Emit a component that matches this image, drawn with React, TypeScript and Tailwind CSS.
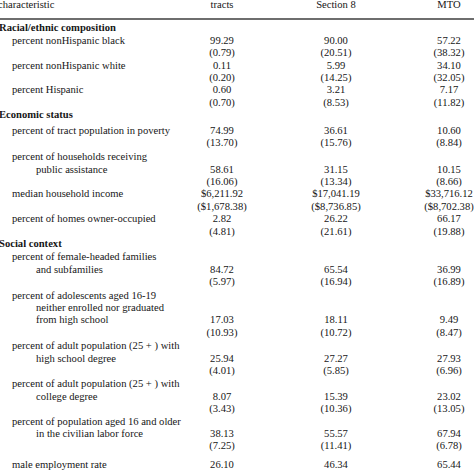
import React from 'react';

type Item = {
  lines: string[];
  values: [string, string, string];
  sds?: [string, string, string];
  gap?: string;
};

type Section = {
  title: string;
  gap?: string;
  items: Item[];
};

const sections: Section[] = [
  {
    title: 'Racial/ethnic composition',
    items: [
      { lines: ['percent nonHispanic black'], values: ['99.29', '90.00', '57.22'], sds: ['(0.79)', '(20.51)', '(38.32)'] },
      { lines: ['percent nonHispanic white'], values: ['0.11', '5.99', '34.10'], sds: ['(0.20)', '(14.25)', '(32.05)'] },
      { lines: ['percent Hispanic'], values: ['0.60', '3.21', '7.17'], sds: ['(0.70)', '(8.53)', '(11.82)'] },
    ],
  },
  {
    title: 'Economic status',
    items: [
      { lines: ['percent of tract population in poverty'], values: ['74.99', '36.61', '10.60'], sds: ['(13.70)', '(15.76)', '(8.84)'], gap: 'mt-[3px]' },
      { lines: ['percent of households receiving', 'public assistance'], values: ['58.61', '31.15', '10.15'], sds: ['(16.06)', '(13.34)', '(8.66)'], gap: 'mt-[2px]' },
      { lines: ['median household income'], values: ['$6,211.92', '$17,041.19', '$33,716.12'], sds: ['($1,678.38)', '($8,736.85)', '($8,702.38)'] },
      { lines: ['percent of homes owner-occupied'], values: ['2.82', '26.22', '66.17'], sds: ['(4.81)', '(21.61)', '(19.88)'] },
    ],
  },
  {
    title: 'Social context',
    items: [
      { lines: ['percent of female-headed families', 'and subfamilies'], values: ['84.72', '65.54', '36.99'], sds: ['(5.97)', '(16.94)', '(16.89)'], gap: 'mt-[1px]' },
      { lines: ['percent of adolescents aged 16-19', 'neither enrolled nor graduated', 'from high school'], values: ['17.03', '18.11', '9.49'], sds: ['(10.93)', '(10.72)', '(8.47)'], gap: 'mt-[1px]' },
      { lines: ['percent of adult population (25 + ) with', 'high school degree'], values: ['25.94', '27.27', '27.93'], sds: ['(4.01)', '(5.85)', '(6.96)'], gap: 'mt-[1px]' },
      { lines: ['percent of adult population (25 + ) with', 'college degree'], values: ['8.07', '15.39', '23.02'], sds: ['(3.43)', '(10.36)', '(13.05)'], gap: 'mt-[1px]' },
      { lines: ['percent of population aged 16 and older', 'in the civilian labor force'], values: ['38.13', '55.57', '67.94'], sds: ['(7.25)', '(11.41)', '(6.78)'] },
      { lines: ['male employment rate'], values: ['26.10', '46.34', '65.44'], gap: 'mt-[6px]' },
    ],
  },
];

const grid = 'grid grid-cols-[186px_72px_156px_70px] h-[12.4px] items-center whitespace-nowrap';

function Line({ label, indent, vals }: { label: string; indent: string; vals?: string[] }) {
  return (
    <div className={grid}>
      <div className={indent}>{label}</div>
      <div className="text-center">{vals?.[0]}</div>
      <div className="text-center">{vals?.[1]}</div>
      <div className="text-center">{vals?.[2]}</div>
    </div>
  );
}

export default function App() {
  return (
    <div
      className="w-[474px] h-[474px] overflow-hidden bg-white text-[#161616] text-[10.6px] leading-[12.4px]"
      style={{ fontFamily: '"Liberation Serif", "Times New Roman", serif' }}
    >
      <div className={`${grid} -mt-[1px]`}>
        <div className="-ml-[2px]">characteristic</div>
        <div className="text-center">tracts</div>
        <div className="text-center">Section 8</div>
        <div className="text-center">MTO</div>
      </div>
      <div className="mt-[7px] h-[2px] bg-[#6e6e6e]" />
      <div className="mt-[2px]">
        {sections.map((s) => (
          <div key={s.title} className={s.gap}>
            <div className="h-[12.4px] font-bold -ml-[1px]">{s.title}</div>
            {s.items.map((it, i) => (
              <div key={i} className={it.gap}>
                {it.lines.map((l, j) => (
                  <Line
                    key={j}
                    label={l}
                    indent={j === 0 ? 'pl-[12px]' : 'pl-[36px]'}
                    vals={j === it.lines.length - 1 ? it.values : undefined}
                  />
                ))}
                {it.sds && <Line label="" indent="" vals={it.sds} />}
              </div>
            ))}
          </div>
        ))}
      </div>
    </div>
  );
}
